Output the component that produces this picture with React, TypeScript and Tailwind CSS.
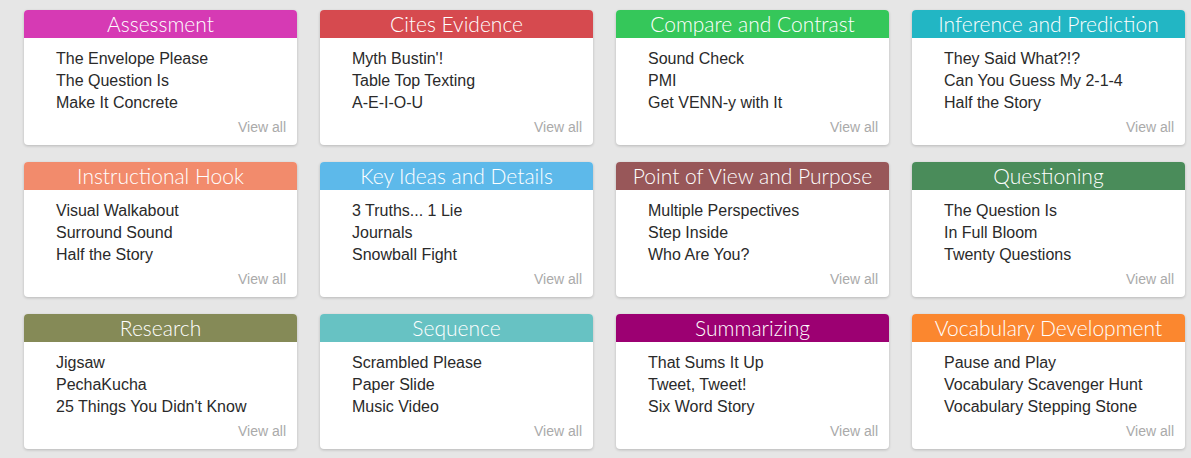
type Category = {
  title: string;
  color: string;
  items: string[];
};

const categories: Category[] = [
  { title: "Assessment", color: "bg-[#d63ab4]", items: ["The Envelope Please", "The Question Is", "Make It Concrete"] },
  { title: "Cites Evidence", color: "bg-[#d64a4f]", items: ["Myth Bustin'!", "Table Top Texting", "A-E-I-O-U"] },
  { title: "Compare and Contrast", color: "bg-[#35c75a]", items: ["Sound Check", "PMI", "Get VENN-y with It"] },
  { title: "Inference and Prediction", color: "bg-[#22b6c4]", items: ["They Said What?!?", "Can You Guess My 2-1-4", "Half the Story"] },
  { title: "Instructional Hook", color: "bg-[#f28b6c]", items: ["Visual Walkabout", "Surround Sound", "Half the Story"] },
  { title: "Key Ideas and Details", color: "bg-[#5db9ea]", items: ["3 Truths... 1 Lie", "Journals", "Snowball Fight"] },
  { title: "Point of View and Purpose", color: "bg-[#985759]", items: ["Multiple Perspectives", "Step Inside", "Who Are You?"] },
  { title: "Questioning", color: "bg-[#4a8c5a]", items: ["The Question Is", "In Full Bloom", "Twenty Questions"] },
  { title: "Research", color: "bg-[#858a57]", items: ["Jigsaw", "PechaKucha", "25 Things You Didn't Know"] },
  { title: "Sequence", color: "bg-[#67c2c3]", items: ["Scrambled Please", "Paper Slide", "Music Video"] },
  { title: "Summarizing", color: "bg-[#9c0072]", items: ["That Sums It Up", "Tweet, Tweet!", "Six Word Story"] },
  { title: "Vocabulary Development", color: "bg-[#fb872f]", items: ["Pause and Play", "Vocabulary Scavenger Hunt", "Vocabulary Stepping Stone"] },
];

function CategoryCard({ category }: { category: Category }) {
  return (
    <div className="flex h-[135px] flex-col overflow-hidden rounded-[4px] bg-white shadow-[0_1px_3px_rgba(0,0,0,0.2)]">
      {/* Header */}
      <div
        className={`${category.color} flex h-[28px] items-center justify-center pb-[2px] text-[21px] font-light leading-none text-white`}
        style={{ fontFamily: "Lato, 'Open Sans', sans-serif" }}
      >
        {category.title}
      </div>

      {/* Items */}
      <div className="flex flex-1 flex-col pl-[32px] pr-[11px] pt-[10px]">
        <ul className="text-[16px] leading-[22px] text-[#2a2a2a]">
          {category.items.map((item) => (
            <li key={item}>{item}</li>
          ))}
        </ul>
        <a href="#" className="mt-[2px] self-end text-[14px] leading-[22px] text-[#aaa]">
          View all
        </a>
      </div>
    </div>
  );
}

export default function App() {
  return (
    <div
      className="min-h-[458px] w-full bg-[#e6e6e6] pl-[24px] pt-[10px]"
      style={{ fontFamily: "'Liberation Sans', Arial, sans-serif" }}
    >
      <div className="grid grid-cols-[repeat(4,273px)] gap-x-[23px] gap-y-[17px]">
        {categories.map((c) => (
          <CategoryCard key={c.title} category={c} />
        ))}
      </div>
    </div>
  );
}
